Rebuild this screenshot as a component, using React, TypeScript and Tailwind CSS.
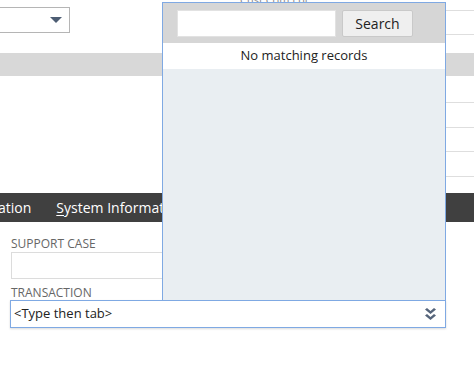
const font = { fontFamily: '"Open Sans", "Noto Sans", sans-serif' };

function LookupPopup() {
  return (
    <div className="absolute left-[162px] top-[2px] w-[284px] h-[299px] border border-[#7fa9e3] bg-[#e9eef2] flex flex-col">
      <div className="h-[40px] bg-[#d6d6d6] flex items-center gap-[6px] pl-[14px]">
        <div className="w-[159px] h-[27px] bg-white border border-[#e2e2e2]" />
        <button className="w-[71px] h-[27px] bg-[#efefef] border border-[#c9c9c9] rounded-[2px] text-[14px] text-[#222]">
          Search
        </button>
      </div>
      <div className="h-[26px] bg-white flex items-center justify-center text-[13px] text-[#222]">
        No matching records
      </div>
    </div>
  );
}

function DoubleChevron() {
  return (
    <svg width="13" height="13" viewBox="0 0 13 13">
      <path d="M1 1.5 L3 0 L6.5 3 L10 0 L12 1.5 L6.5 6 Z" fill="#55647a" />
      <path d="M1 7.5 L3 6 L6.5 9 L10 6 L12 7.5 L6.5 12 Z" fill="#55647a" />
    </svg>
  );
}

export default function App() {
  return (
    <div className="relative w-[474px] h-[372px] bg-white overflow-hidden" style={font}>
      {/* top form row */}
      <div className="flex h-[53px]">
        <div className="w-[240px] pt-[7px]">
          <div className="w-[71px] h-[26px] -ml-px border border-[#b5b5b5] bg-white flex items-center justify-end pr-[7px]">
            <svg width="12" height="6" viewBox="0 0 12 6">
              <path d="M0 0 H12 L6 6 Z" fill="#4d5d73" />
            </svg>
          </div>
        </div>
        <div className="flex-1 flex flex-col">
          <div className="h-[10px] -mt-[6px] text-[11px] leading-[12px] text-[#888]">Cust Com Lbl</div>
          <div className="h-[25px] mt-[6px] border-y border-[#dedede]" />
        </div>
      </div>

      {/* section band */}
      <div className="h-[23px] bg-[#d8d8d8]" />

      {/* right column fields */}
      <div className="flex h-[117px]">
        <div className="w-[240px]" />
        <div className="flex-1 pt-[26px] flex flex-col">
          <div className="h-[25px] border-t border-[#dedede]" />
          <div className="h-[24px] border-t border-[#dedede]" />
          <div className="h-[25px] border-t border-[#dedede]" />
          <div className="h-[17px] border-t border-[#dedede]" />
        </div>
      </div>

      {/* tab bar */}
      <div className="h-[29px] bg-[#404040] flex items-center text-white text-[14px] -ml-[2px]">
        <span>ation</span>
        <span className="ml-[25px]">
          <span className="underline underline-offset-2">S</span>ystem Information
        </span>
      </div>

      {/* fields */}
      <div className="pl-[11px] pr-[28px] pt-[15px] flex flex-col">
        <div className="text-[12px] leading-[14px] text-[#666] uppercase">Support Case</div>
        <div className="h-[27px] mt-[1px] border border-[#dcdcdc] bg-white" />
        <div className="text-[12px] leading-[14px] text-[#666] uppercase mt-[7px]">Transaction</div>
        <div className="h-[28px] -ml-px border border-[#7fa9e3] bg-white flex items-center justify-between pl-[3px] pr-[8px] shadow-[0_1px_2px_rgba(0,0,0,0.15)]">
          <span className="text-[13px] text-[#222]">&lt;Type then tab&gt;</span>
          <DoubleChevron />
        </div>
      </div>

      <LookupPopup />
    </div>
  );
}
